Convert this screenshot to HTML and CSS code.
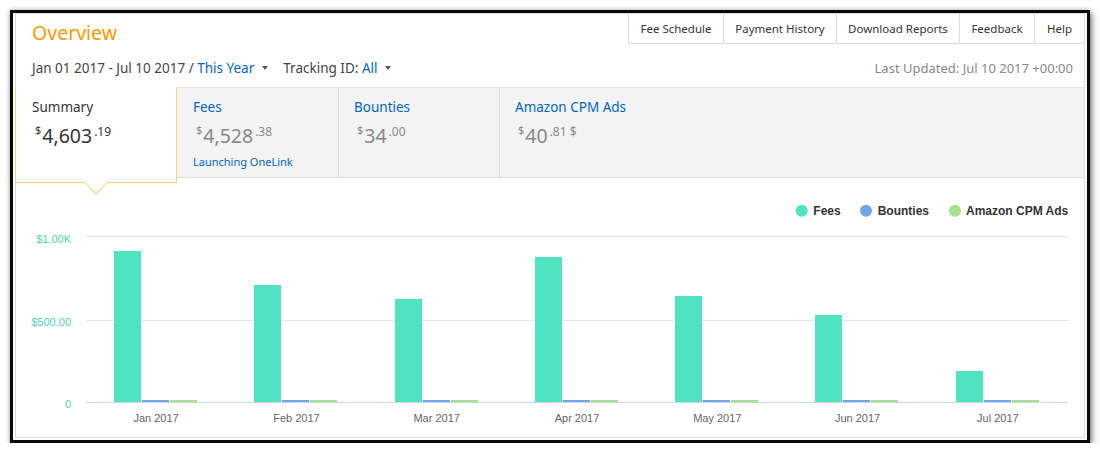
FILE: index.html
```html
<!DOCTYPE html>
<html lang="en">
<head>
<meta charset="utf-8">
<title>Overview</title>
<link rel="stylesheet" href="styles.css">
</head>
<body>
<div class="frame">
  <div class="card">
    <div class="head">
      <h1 class="title">Overview</h1>
      <nav class="links">
        <a class="link-fee">Fee Schedule</a>
        <a class="link-pay">Payment History</a>
        <a class="link-dl">Download Reports</a>
        <a class="link-fb">Feedback</a>
        <a class="link-help">Help</a>
      </nav>
    </div>
    <div class="filters">
      <div class="range">
        <span>Jan 01 2017 - Jul 10 2017 / </span><a class="blue">This Year</a><span class="caret"></span>
        <span class="tracking">Tracking ID: <a class="blue">All</a></span><span class="caret"></span>
      </div>
      <div class="updated">Last Updated: Jul 10 2017 +00:00</div>
    </div>
    <div class="tabs">
      <div class="tab-summary">
        <div class="tab-title">Summary</div>
        <div class="amount dark"><span class="cur">$</span>4,603<span class="cents">.19</span></div>
      </div>
      <div class="tab-group">
        <div class="tab tab-fees">
          <div class="tab-title blue">Fees</div>
          <div class="amount"><span class="cur">$</span>4,528<span class="cents">.38</span></div>
          <div class="sublink">Launching OneLink</div>
        </div>
        <div class="tab tab-bounties">
          <div class="tab-title blue">Bounties</div>
          <div class="amount"><span class="cur">$</span>34<span class="cents">.00</span></div>
        </div>
        <div class="tab tab-cpm">
          <div class="tab-title blue">Amazon CPM Ads</div>
          <div class="amount"><span class="cur">$</span>40<span class="cents">.81 $</span></div>
        </div>
      </div>
    </div>
    <div class="chart">
      <svg width="1068" height="254" viewBox="0 0 1068 254">
        <g class="legend">
          <circle cx="785.7" cy="27.7" r="6" fill="#50e3c2"/>
          <text x="797.3" y="32">Fees</text>
          <circle cx="850" cy="27.7" r="6" fill="#6ea6e6"/>
          <text x="861.7" y="32">Bounties</text>
          <circle cx="939" cy="27.7" r="6" fill="#a5e28c"/>
          <text x="950" y="32">Amazon CPM Ads</text>
        </g>
        <g class="grid">
          <line x1="70" x2="1052" y1="53.5" y2="53.5"/>
          <line x1="70" x2="1052" y1="137.5" y2="137.5"/>
        </g>
        <g class="yaxis">
          <text x="55" y="60">$1.00K</text>
          <text x="55" y="143">$500.00</text>
          <text x="55" y="224.5">0</text>
        </g>
        <g class="bars">
          <rect class="fees" x="98" y="68" width="27" height="151"/>
          <rect class="bnt" x="126" y="217" width="27" height="2"/>
          <rect class="cpm" x="154" y="217" width="27" height="2"/>

          <rect class="fees" x="238" y="102" width="27" height="117"/>
          <rect class="bnt" x="266" y="217" width="27" height="2"/>
          <rect class="cpm" x="294" y="217" width="27" height="2"/>

          <rect class="fees" x="379" y="116" width="27" height="103"/>
          <rect class="bnt" x="407" y="217" width="27" height="2"/>
          <rect class="cpm" x="435" y="217" width="27" height="2"/>

          <rect class="fees" x="519" y="74" width="27" height="145"/>
          <rect class="bnt" x="547" y="217" width="27" height="2"/>
          <rect class="cpm" x="575" y="217" width="27" height="2"/>

          <rect class="fees" x="659" y="113" width="27" height="106"/>
          <rect class="bnt" x="687" y="217" width="27" height="2"/>
          <rect class="cpm" x="715" y="217" width="27" height="2"/>

          <rect class="fees" x="799" y="132" width="27" height="87"/>
          <rect class="bnt" x="827" y="217" width="27" height="2"/>
          <rect class="cpm" x="855" y="217" width="27" height="2"/>

          <rect class="fees" x="940" y="188" width="27" height="31"/>
          <rect class="bnt" x="968" y="217" width="27" height="2"/>
          <rect class="cpm" x="996" y="217" width="27" height="2"/>
        </g>
        <line class="baseline" x1="70" x2="1052" y1="219.5" y2="219.5"/>
        <g class="xaxis">
          <text x="140.1" y="238.5">Jan 2017</text>
          <text x="280.4" y="238.5">Feb 2017</text>
          <text x="420.7" y="238.5">Mar 2017</text>
          <text x="561" y="238.5">Apr 2017</text>
          <text x="701.3" y="238.5">May 2017</text>
          <text x="841.6" y="238.5">Jun 2017</text>
          <text x="981.9" y="238.5">Jul 2017</text>
        </g>
      </svg>
    </div>
  </div>
</div>
</body>
</html>
```

FILE: styles.css
```css
* { box-sizing: border-box; }

body {
  margin: 0;
  background: #fff;
  font-family: "Noto Sans", "Open Sans", sans-serif;
  color: #444;
}

.frame {
  margin: 10px 0 0 10px;
  width: 1080px;
  height: 433px;
  border: 3px solid #0a0a0a;
  padding: 0 2px 2px 2px;
  box-shadow: 2px 3px 6px rgba(0, 0, 0, 0.45), 0 0 5px rgba(0, 0, 0, 0.25);
}

.card {
  height: 100%;
  border: 1px solid #ddd;
  display: flex;
  flex-direction: column;
}

/* header */
.head {
  display: flex;
  justify-content: space-between;
  align-items: flex-start;
  height: 30px;
  flex: none;
}

.title {
  margin: 0;
  padding: 6px 0 0 16px;
  font-size: 19.5px;
  line-height: 26px;
  font-weight: 400;
  color: #f90;
}

.links { display: flex; }

.links a {
  display: flex;
  align-items: center;
  justify-content: center;
  height: 30px;
  border-left: 1px solid #ddd;
  border-bottom: 1px solid #ddd;
  font-size: 11.5px;
  color: #333;
  text-decoration: none;
}

.link-fee { width: 95px; }
.link-pay { width: 113px; }
.link-dl { width: 123px; }
.link-fb { width: 75px; }
.link-help { width: 50px; }

/* filters */
.filters {
  display: flex;
  justify-content: space-between;
  align-items: flex-start;
  height: 43px;
  flex: none;
  padding: 15px 11px 0 16px;
  line-height: 18px;
}

.range {
  display: flex;
  align-items: center;
  white-space: pre;
  font-size: 13.5px;
  color: #444;
}

.blue { color: #0066c0; }

.caret {
  width: 0;
  height: 0;
  margin: 0 15px 0 8px;
  border-left: 3.5px solid transparent;
  border-right: 3.5px solid transparent;
  border-top: 4px solid #555;
}

.updated { font-size: 13px; color: #888; }

/* tabs */
.tabs {
  display: flex;
  align-items: flex-start;
  height: 96px;
  flex: none;
}

.tab-summary {
  position: relative;
  z-index: 1;
  width: 162px;
  height: 96px;
  margin-left: -1px;
  border: 1px solid #fcd078;
  border-top: 0;
  background: #fff;
  padding: 11px 0 0 16px;
  flex: none;
}

.tab-summary::after {
  content: "";
  position: absolute;
  left: 80px;
  top: 95.5px;
  width: 14.5px;
  height: 14.5px;
  background: #fff;
  border-right: 1px solid #fcd078;
  border-bottom: 1px solid #fcd078;
  transform: translate(-50%, -50%) rotate(45deg);
}

.tab-group {
  flex: 1;
  display: flex;
  height: 91px;
  background: #f3f3f3;
  border-top: 1px solid #e6e6e6;
  border-bottom: 1px solid #ddd;
}

.tab {
  height: 100%;
  padding: 10px 0 0 16px;
  border-right: 1px solid #ddd;
}

.tab-fees { width: 162px; }
.tab-bounties { width: 161px; padding-left: 15px; }
.tab-cpm { width: 159px; padding-left: 15px; border-right-color: transparent; }

.tab-title {
  font-size: 13.5px;
  line-height: 18px;
  color: #333;
}

.tab-title.blue { color: #0066c0; }

.amount {
  margin-top: 8px;
  padding-left: 3px;
  font-size: 19.5px;
  line-height: 24px;
  color: #888;
  white-space: pre;
}

.amount.dark { color: #333; }

.cur {
  font-size: 11px;
  line-height: 1;
  vertical-align: 9px;
  margin-right: 1px;
}

.cents {
  font-size: 12px;
  line-height: 1;
  vertical-align: 7.5px;
  margin-left: 2px;
}

.sublink {
  margin-top: 6px;
  font-size: 11px;
  line-height: 15px;
  color: #0066c0;
}

/* chart */
.chart { flex: 1; }
.chart svg { display: block; }

.legend text {
  font-family: "Liberation Sans", Arial, sans-serif;
  font-size: 12px;
  font-weight: 700;
  fill: #333;
}

.grid line { stroke: #e6e6e6; stroke-width: 1; }
.baseline { stroke: #ccd6eb; stroke-width: 1; }

.yaxis text {
  font-family: "Liberation Sans", Arial, sans-serif;
  font-size: 11px;
  fill: #4fd3b5;
  text-anchor: end;
}

.xaxis text {
  font-family: "Liberation Sans", Arial, sans-serif;
  font-size: 11px;
  fill: #666;
  text-anchor: middle;
}

.bars .fees { fill: #50e3c2; }
.bars .bnt { fill: #6ea6e6; }
.bars .cpm { fill: #a5e28c; }
```
